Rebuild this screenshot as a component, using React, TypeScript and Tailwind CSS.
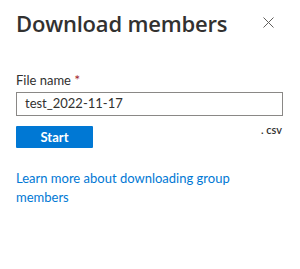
export default function App() {
  return (
    <div
      className="w-[300px] h-[269px] bg-white overflow-hidden"
      style={{ fontFamily: 'Lato, "Open Sans", sans-serif' }}
    >
      <div className="pl-4 pr-[17px]">
        {/* Header */}
        <div className="flex items-start justify-between pt-[8px]">
          <h1
            className="text-[22px] leading-[30px] font-semibold text-[#323130] tracking-[-0.2px]"
            style={{ fontFamily: '"Open Sans", sans-serif' }}
          >
            Download members
          </h1>
          <button className="mt-[9px] mr-[9px] text-[#605e5c]" aria-label="Close">
            <svg width="11" height="11" viewBox="0 0 11 11" fill="none">
              <path d="M0.5 0.5L10.5 10.5M10.5 0.5L0.5 10.5" stroke="currentColor" strokeWidth="1" />
            </svg>
          </button>
        </div>

        {/* Form */}
        <div className="mt-[33px]">
          <label className="block text-[13px] leading-[18px] text-[#323130]">
            File name <span className="text-[14px] text-[#a4262c]">*</span>
          </label>
          <div className="mt-[3px] h-[24px] border border-[#8a8886] flex items-center px-[8px]">
            <span className="text-[13px] text-[#323130]">test_2022-11-17</span>
          </div>
          <div className="flex items-start justify-between mt-[10px]">
            <button className="w-[77px] h-[22px] bg-[#0078d4] text-white text-[13px] font-bold leading-none rounded-[1px]">
              Start
            </button>
            <span className="text-[11px] leading-[12px] font-semibold text-[#323130] -mt-[2px] mr-[1px]">
              .&nbsp;csv
            </span>
          </div>
        </div>

        {/* Link */}
        <p className="mt-[21px] text-[13px] leading-[19px] text-[#0078d4]">
          Learn more about downloading group members
        </p>
      </div>
    </div>
  );
}
